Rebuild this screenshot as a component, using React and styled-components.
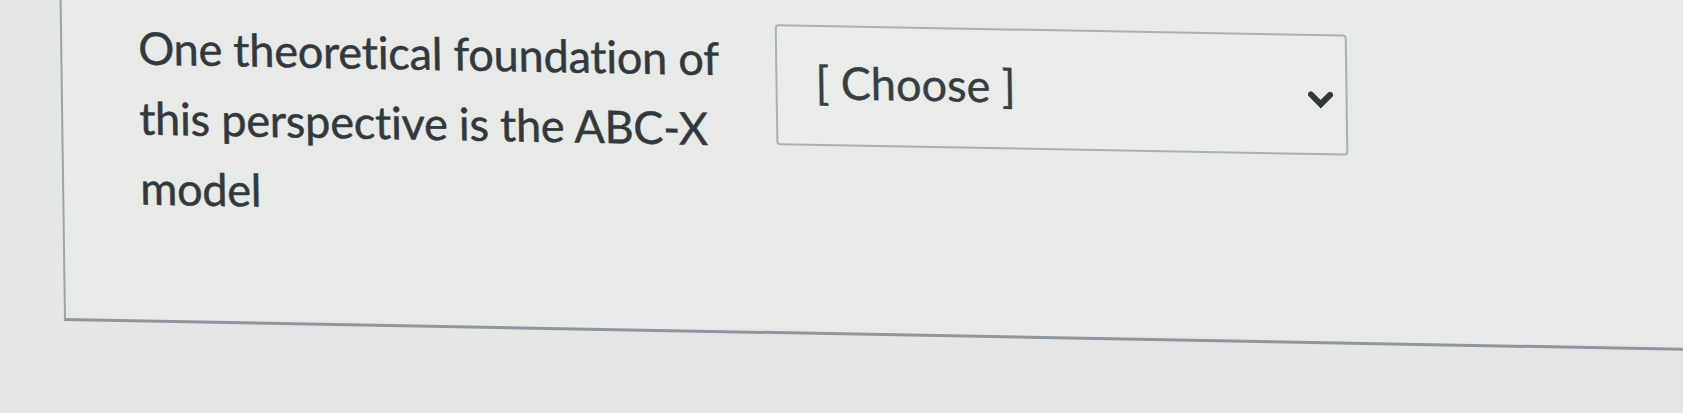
import React from "react";
import styled, { createGlobalStyle } from "styled-components";

const GlobalStyle = createGlobalStyle`
  html, body {
    margin: 0;
    padding: 0;
    background: #e4e7e3;
    overflow: hidden;
  }
  body {
    width: 1683px;
    height: 413px;
    font-family: Lato, "Open Sans", sans-serif;
  }
`;

const Page = styled.div`
  width: 1760px;
  height: 413px;
  transform: skew(0.8deg, 1.05deg);
  transform-origin: 0 0;
`;

const QuestionCard = styled.div`
  margin-left: 59px;
  margin-top: -40px;
  height: 360px;
  box-sizing: border-box;
  border-left: 2px solid #9da3a8;
  border-bottom: 3px solid #8f969d;
  background: #e7eae6;
  display: flex;
  align-items: flex-start;
  padding: 50px 0 0 76px;
  gap: 39px;
`;

const Prompt = styled.p`
  margin: 0;
  width: 598px;
  font-size: 45px;
  line-height: 70px;
  color: #32393e;
  letter-spacing: -0.2px;
  -webkit-text-stroke: 0.5px #32393e;
`;

const Dropdown = styled.div`
  margin-top: 0;
  width: 572px;
  height: 121px;
  box-sizing: border-box;
  border: 2px solid #a9afb4;
  border-radius: 4px;
  background: #e9ece9;
  display: flex;
  align-items: center;
  justify-content: space-between;
  padding: 0 12px 0 38px;
`;

const Placeholder = styled.span`
  font-size: 45px;
  color: #363e42;
  margin-top: -8px;
  -webkit-text-stroke: 0.4px #363e42;
`;

const Chevron = styled.svg`
  width: 26px;
  height: 19px;
  margin-top: 10px;
`;

export default function App() {
  return (
    <>
      <GlobalStyle />
      <Page>
        <QuestionCard>
          <Prompt>One theoretical foundation of this perspective is the ABC-X model</Prompt>
          <Dropdown role="combobox" aria-label="Answer">
            <Placeholder>[ Choose ]</Placeholder>
            <Chevron viewBox="0 0 26 19" aria-hidden="true">
              <path d="M3.5 4.5 L13 14 L22.5 4.5" fill="none" stroke="#30373c" strokeWidth="6" strokeLinecap="round" strokeLinejoin="miter" />
            </Chevron>
          </Dropdown>
        </QuestionCard>
      </Page>
    </>
  );
}
